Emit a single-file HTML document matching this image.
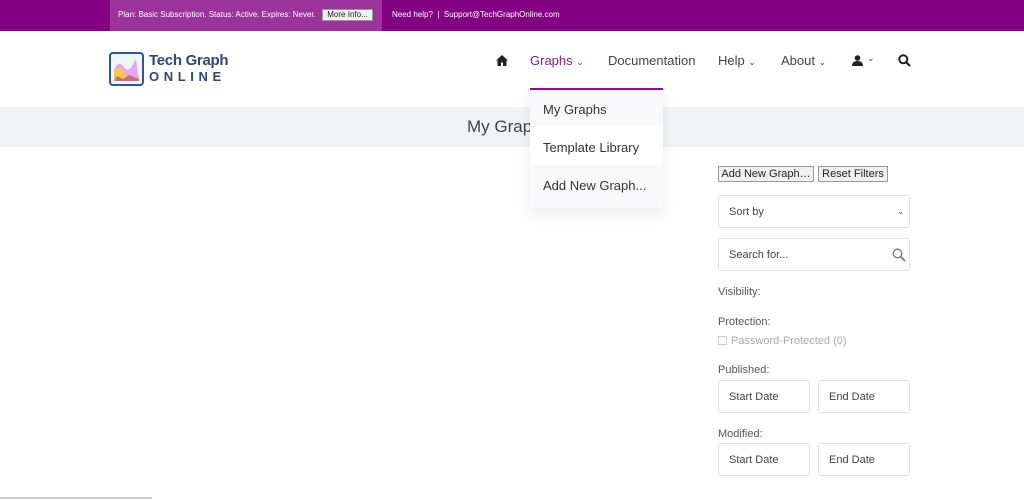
<!DOCTYPE html>
<html><head><style>
*{box-sizing:border-box;margin:0;padding:0}
body{width:1024px;height:501px;overflow:hidden;background:#fff;font-family:"Liberation Sans",sans-serif;position:relative;color:#333}
.abs{position:absolute}
.top{left:0;top:0;width:1024px;height:31px;background:#830083}
.plan{left:110px;top:0;width:272px;height:31px;background:#9c339a}
.tt{color:#fff;font-size:8px;top:10px;white-space:nowrap}
.btn{background:#f0f0f0;border:1px solid #999;color:#222;font-size:11px;line-height:14px;text-align:center;white-space:nowrap;overflow:hidden}
.nav{top:53px;font-size:13px;color:#444;white-space:nowrap}
.chev{font-size:9px}
.band{left:0;top:107px;width:1024px;height:40px;background:#f2f3f5}
.dd{left:530px;top:88px;width:133px;height:120px;background:#f9f9fb;border-top:2px solid #8c0b8c;box-shadow:0 6px 14px rgba(0,0,0,.08)}
.dd div{position:absolute;left:13px;font-size:13px;color:#333}
.inp{border:1px solid #e2e2e2;border-radius:3px;background:#fff;font-size:11px;color:#444;padding-left:10px;display:flex;align-items:center}
.lbl{left:718px;font-size:11px;color:#555}
</style></head><body>
<div class="abs top"></div>
<div class="abs plan"></div>
<div class="abs tt" style="left:118px">Plan: Basic Subscription. Status: Active. Expires: Never.</div>
<div class="abs btn" style="left:322px;top:9px;width:51px;height:12px;font-size:8px;line-height:10px">More Info...</div>
<div class="abs tt" style="left:392px">Need help? &nbsp;| &nbsp;Support@TechGraphOnline.com</div>
<svg class="abs" style="left:109px;top:52px" width="35" height="34" viewBox="0 0 35 34"><rect x="1" y="1" width="33" height="32" rx="3" fill="#eef4fa" stroke="#2a5a8a" stroke-width="2"/><path d="M5 29 L5 18 Q9 8 14 14 Q18 20 22 16 L27 7 L30 29Z" fill="#e8a6f0"/><path d="M5 29 L5 20 Q10 10 16 22 L20 26 L30 24 L30 29Z" fill="#f5c84a"/><path d="M5 29 L8 24 L14 27 L20 23 L30 27 L30 29Z" fill="#c0708c"/></svg>
<div class="abs" style="left:149px;top:52px;font-size:15px;color:#2b4a78;font-weight:bold;letter-spacing:-.3px">Tech Graph</div>
<div class="abs" style="left:149px;top:69px;font-size:13px;color:#2b4a78;font-weight:bold;letter-spacing:4.6px">ONLINE</div>
<svg class="abs" style="left:496px;top:55px" width="12" height="11" viewBox="0 0 12 11"><path d="M6 0L0 5.5h1.5V11h3.5V7.5h2V11h3.5V5.5H12z" fill="#222"/></svg>
<div class="abs nav" style="left:530px;color:#8c1a8c">Graphs <span class="chev">⌄</span></div>
<div class="abs nav" style="left:608px">Documentation</div>
<div class="abs nav" style="left:718px">Help <span class="chev">⌄</span></div>
<div class="abs nav" style="left:781px">About <span class="chev">⌄</span></div>
<svg class="abs" style="left:852px;top:55px" width="11" height="11" viewBox="0 0 11 11"><circle cx="5.5" cy="3" r="2.8" fill="#222"/><path d="M0 11Q0 6 5.5 6Q11 6 11 11z" fill="#222"/></svg>
<div class="abs nav" style="left:867px;font-size:9px">⌄</div>
<svg class="abs" style="left:898px;top:54px" width="13" height="13" viewBox="0 0 13 13"><circle cx="5.3" cy="5.3" r="4" fill="none" stroke="#222" stroke-width="2"/><path d="M8.3 8.3L12 12" stroke="#222" stroke-width="2.2"/></svg>
<div class="abs band"></div>
<div class="abs" style="left:467px;top:117px;font-size:17px;color:#444">My Graphs</div>
<div class="abs dd">
<div style="top:12px">My Graphs</div>
<div style="top:37px;left:0;width:133px;height:38px;background:#fff"></div>
<div style="top:50px">Template Library</div>
<div style="top:88px">Add New Graph...</div>
</div>
<div class="abs btn" style="left:718px;top:166px;width:96px;height:16px">Add New Graph…</div>
<div class="abs btn" style="left:818px;top:166px;width:70px;height:16px">Reset Filters</div>
<div class="abs inp" style="left:718px;top:195px;width:192px;height:33px">Sort by<span style="position:absolute;right:5px;font-size:8px">⌄</span></div>
<div class="abs inp" style="left:718px;top:238px;width:192px;height:33px">Search for...
<svg style="position:absolute;right:3px;top:9px" width="14" height="14" viewBox="0 0 14 14"><circle cx="5.5" cy="5.5" r="4.3" fill="none" stroke="#777" stroke-width="1.3"/><path d="M8.6 8.6L13 13" stroke="#777" stroke-width="1.8"/></svg></div>
<div class="abs lbl" style="top:286px">Visibility:</div>
<div class="abs lbl" style="top:316px">Protection:</div>
<div class="abs" style="left:718px;top:336px;width:9px;height:9px;border:1px solid #ccc"></div>
<div class="abs" style="left:731px;top:335px;font-size:11px;color:#aaa">Password-Protected (0)</div>
<div class="abs lbl" style="top:364px">Published:</div>
<div class="abs inp" style="left:718px;top:380px;width:92px;height:33px">Start Date</div>
<div class="abs inp" style="left:818px;top:380px;width:92px;height:33px">End Date</div>
<div class="abs lbl" style="top:428px">Modified:</div>
<div class="abs inp" style="left:718px;top:443px;width:92px;height:33px">Start Date</div>
<div class="abs inp" style="left:818px;top:443px;width:92px;height:33px">End Date</div>
<div class="abs" style="left:0;top:497px;width:152px;height:2px;background:#ccc"></div>
</body></html>
